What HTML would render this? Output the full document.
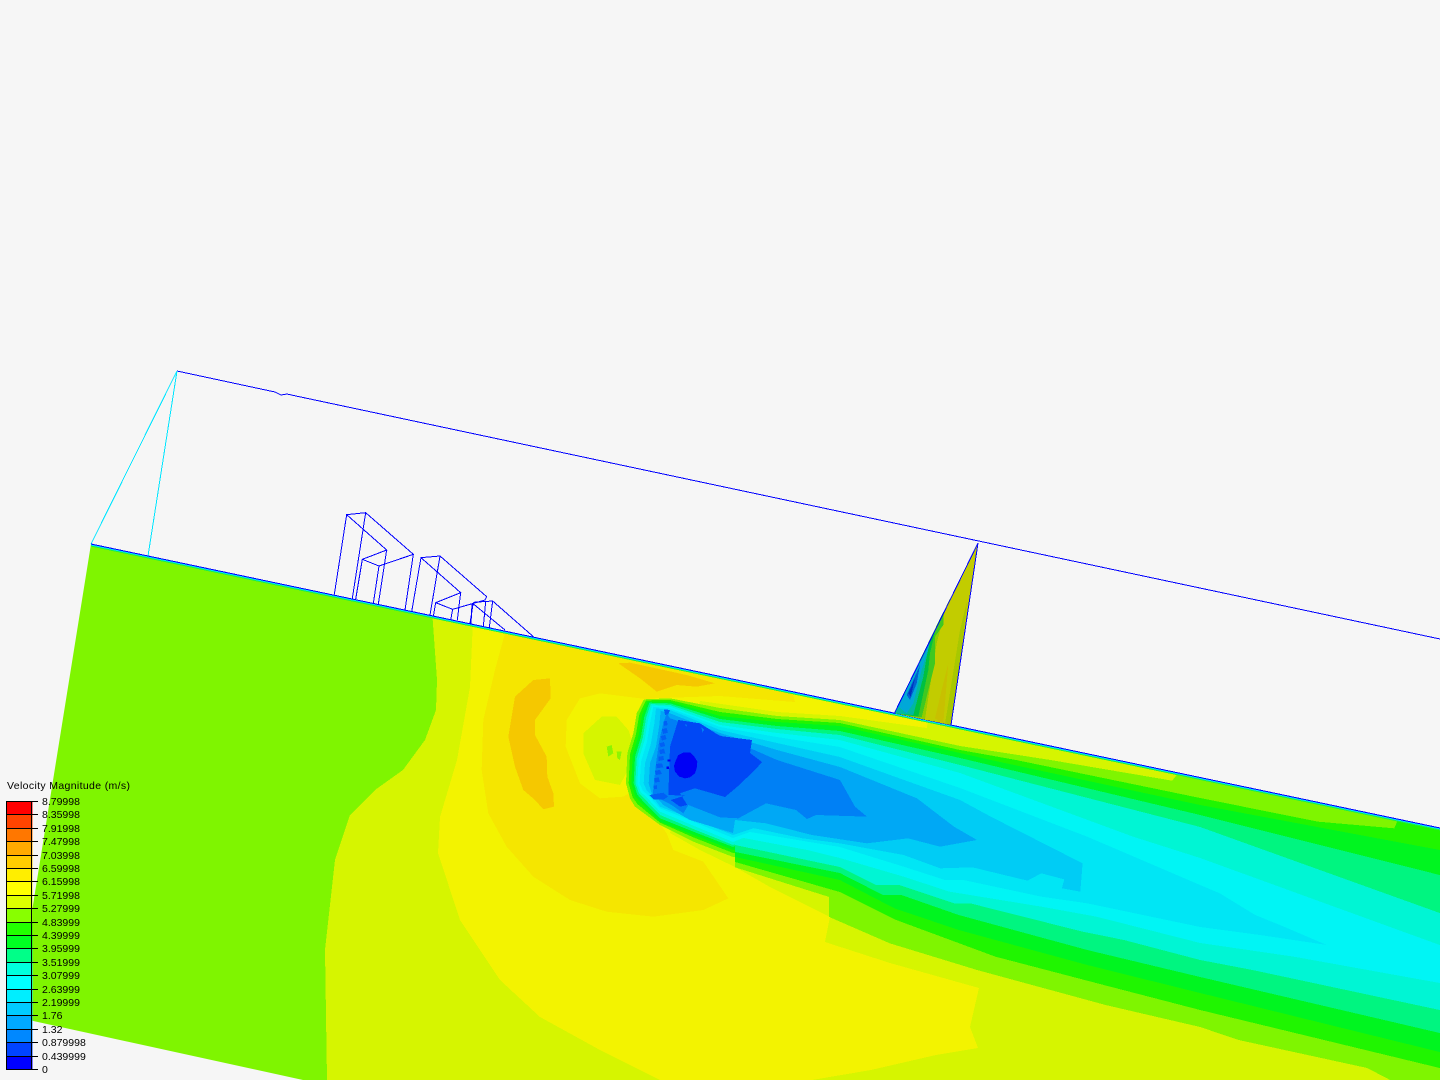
<!DOCTYPE html>
<html lang="en">
<head>
<meta charset="utf-8">
<title>Velocity Magnitude</title>
<style>
html,body{margin:0;padding:0;background:#f6f6f6;width:1440px;height:1080px;overflow:hidden}
svg{display:block;position:absolute;left:0;top:0}
text{font-family:"Liberation Sans","DejaVu Sans",sans-serif;font-size:10.5px;fill:#000}
</style>
</head>
<body>
<svg width="1440" height="1080" viewBox="0 0 1440 1080" xmlns="http://www.w3.org/2000/svg">
<defs>
<clipPath id="plane"><polygon points="91,544 1440,828 1440,1080 303,1080 15,1017"/></clipPath>
</defs>
<rect width="1440" height="1080" fill="#f6f6f6"/>

<!-- wireframe top -->
<g fill="none" stroke-width="1" shape-rendering="crispEdges">
<polyline stroke="#0000ff" points="177,371 275,392 281,395 287,394 296,396 1440,639"/>
<line stroke="#00e5ff" x1="177" y1="371" x2="91" y2="544"/>
<line stroke="#00e5ff" x1="177" y1="371" x2="148" y2="556"/>
</g>

<!-- blocks -->
<g transform="translate(320,500) scale(.33333)" fill="none" stroke="#0000ff" stroke-width="3" shape-rendering="crispEdges">
<path d="M43,283L80,44L137,38L97,295M80,44L200,150L127,178L107,298M137,38L280,163L177,198L160,310M127,178L177,198M200,150L175,312M280,163L255,330"/>
<path d="M275,335L303,173L360,168L330,345M303,173L422,278L347,308L340,350M360,168L500,290L495,300L398,328L392,360M347,308L398,328M422,278L412,360"/>
<path d="M460,307L518,303L508,382M460,307L450,370M497,305L490,380M458,310L555,390M518,303L640,410M456,310L453,372"/>
</g>

<!-- plane contours -->
<g clip-path="url(#plane)" shape-rendering="crispEdges">
<rect x="0" y="500" width="1440" height="580" fill="#7ff500"/>
<polygon fill="#d6f500" points="432,610 437,680 436,710 425,740 403,770 375,790 350,815 335,860 325,950 327,1080 1440,1080 1440,780 1100,700"/>
<polygon fill="#f3f300" points="473,620 470,687 457,760 440,817 438,853 460,920 500,980 540,1017 600,1050 660,1080 812,1080 871,1070 936,1055 978,1048 970,1027 979,988 890,963 825,942 830,917 800,902 770,887 735,867 700,850 670,833 680,800 700,701 777,712 840,716 927,728 930,700 600,610"/>

<g transform="translate(420,620) scale(.33333)">
<polygon fill="#f5e600" points="255,40 225,150 190,300 185,450 205,580 260,680 340,770 450,840 560,875 700,890 850,870 925,835 850,725 760,690 740,640 640,500 660,240 700,235 900,228 1125,246 1100,150 600,60"/>
<polygon fill="#f3f300" points="700,240 540,220 480,235 440,300 437,380 480,490 540,535 610,530 660,500 680,300"/>
<polygon fill="#d6f500" points="490,340 545,290 590,290 625,330 650,400 600,495 525,480 490,400"/>
<polygon fill="#8cf500" points="560,380 575,375 580,400 565,410"/>
<polygon fill="#8cf500" points="590,395 605,395 600,420 592,415"/>
<polygon fill="#f5c800" points="340,180 390,175 392,235 345,300 345,345 380,410 382,470 400,520 402,560 370,568 345,540 310,510 285,440 265,350 285,230"/>
<polygon fill="#f5c800" points="595,130 630,128 800,165 885,190 830,200 770,195 710,215 660,175"/>
</g>

<g fill="#7ff500">
<polygon transform="translate(600,680) scale(.33333)" points="720,120 531,108 360,84 210,55 132,58 110,100 100,160 82,220 78,310 90,355 105,380 180,435 280,485 399,531 405,531 720,360"/>
<polygon transform="translate(720,760) scale(.459,.33333)" points="261,-120 523,-42 720,0 985,62 1010,20 1600,190 1600,1000 1460,960 1410,924 1130,840 1046,801 840,735 560,630 370,550 238,471 238,411 33,322 33,100"/>
</g>
<g fill="#20f500">
<polygon transform="translate(600,680) scale(.33333)" points="720,129 531,117 360,96 210,60 138,61 118,103 108,163 90,223 86,310 98,352 112,372 180,428 280,472 399,519 405,519 720,360"/>
<polygon transform="translate(720,760) scale(.459,.33333)" points="261,-111 523,-30 645,0 1046,114 1303,185 1469,205 1480,170 1600,190 1600,924 1568,924 1046,750 850,680 600,590 380,478 261,396 33,306 33,100"/>
</g>
<g fill="#00f520">
<polygon transform="translate(600,680) scale(.33333)" points="720,138 531,126 360,108 210,65 143,65 126,106 116,166 98,226 94,310 105,348 120,365 180,425 280,465 399,510 405,510 720,360"/>
<polygon transform="translate(720,760) scale(.459,.33333)" points="261,-102 523,-21 590,0 1046,135 1568,270 1600,280 1600,884 1568,876 1046,699 800,615 520,510 380,445 261,360 33,291 33,100"/>
</g>
<g fill="#00f580">
<polygon transform="translate(600,680) scale(.33333)" points="720,153 531,138 360,117 210,70 148,68 133,110 123,170 105,230 101,310 112,344 126,360 180,415 280,455 399,501 720,360"/>
<polygon transform="translate(720,760) scale(.459,.33333)" points="261,-87 523,-6 1046,165 1568,345 1600,355 1600,830 1568,819 1046,651 800,570 520,465 395,405 355,405 261,339 33,276 33,100"/>
</g>
<g fill="#00f5d4">
<polygon transform="translate(600,680) scale(.33333)" points="720,165 531,147 360,126 210,75 152,72 138,115 128,175 110,235 106,310 117,340 132,355 180,405 280,447 399,495 720,360"/>
<polygon transform="translate(720,760) scale(.459,.33333)" points="261,-75 523,15 1046,201 1568,459 1600,475 1600,760 1568,750 1160,630 1046,600 880,540 790,515 545,430 510,430 390,375 340,375 261,321 33,255 33,100"/>
</g>
<g fill="#00f5f5">
<polygon transform="translate(600,680) scale(.33333)" points="720,180 531,159 360,135 210,80 156,76 144,120 134,180 116,240 112,310 122,336 138,350 180,395 280,437 399,486 720,360"/>
<polygon transform="translate(720,760) scale(.459,.33333)" points="261,-60 523,39 900,230 1046,294 1568,555 1600,570 1600,675 1568,669 1250,590 1046,549 820,470 700,440 500,395 400,350 261,294 190,270 40,231 33,231 33,100"/>
</g>
<g fill="#00e6f5">
<polygon transform="translate(600,680) scale(.33333)" points="720,201 531,171 360,141 210,85 160,80 151,125 141,185 123,245 119,310 128,332 144,345 180,385 280,425 399,474 720,360"/>
<polygon transform="translate(720,760) scale(.459,.33333)" points="261,-39 523,84 800,230 1046,375 1089,400 1166,465 1220,495 1322,555 1176,525 1046,501 800,430 700,410 530,360 490,360 400,320 261,261 190,245 40,210 33,210 33,100"/>
</g>
<g fill="#00ccf5">
<polygon transform="translate(600,680) scale(.33333)" points="720,231 531,189 360,150 210,90 168,85 163,130 153,190 135,250 131,310 140,332 155,345 180,380 280,418 399,465 720,360"/>
<polygon transform="translate(720,760) scale(.459,.33333)" points="261,-9 523,120 590,170 790,310 785,395 745,385 750,358 700,340 670,362 550,322 480,325 400,285 261,250 180,235 40,195 33,195 33,100"/>
</g>
<g transform="translate(600,680) scale(.33333)">
<polygon fill="#00a8f5" points="951,355 720,261 531,210 360,159 210,100 182,92 178,135 168,200 150,250 146,310 155,340 170,352 190,375 270,420 399,459 405,420 498,430 636,465 801,490 924,475 1020,500 1131,480 1062,440"/>
<polygon fill="#0080f5" points="200,100 190,130 178,180 168,250 158,345 215,375 250,400 265,375 360,412 415,415 498,370 588,390 621,417 648,405 801,410 765,380 720,300 531,240 360,165 210,115"/>
<polygon fill="#0048f5" points="235,120 300,130 360,168 456,180 450,219 486,246 465,270 411,321 375,351 285,325 240,340 262,375 240,380 212,360 255,347 205,345 210,200"/>
<g fill="#0060f5">
<polygon points="192,88 210,90 205,103 195,105"/>
<polygon points="190,125 200,122 203,135 193,138"/>
<polygon points="185,148 200,144 204,158 190,162"/>
<polygon points="182,168 196,165 200,177 186,182"/>
<polygon points="178,190 192,186 196,198 182,202"/>
<polygon points="178,210 192,206 196,220 180,222"/>
<polygon points="175,230 190,228 192,240 176,243"/>
<polygon points="168,252 186,250 190,262 170,265"/>
<polygon points="165,272 180,270 186,282 168,285"/>
<polygon points="162,295 176,292 180,305 165,308"/>
<polygon points="160,318 170,315 172,326 162,328"/>
<polygon points="148,345 190,338 204,350 192,358 160,358"/>
</g>
<polygon fill="#0000f5" points="235,225 250,218 270,217 283,230 292,245 290,265 285,280 270,292 255,295 238,290 225,275 222,258 228,240"/>
<polygon fill="#0000f5" points="203,238 212,238 212,245 203,245"/>
<polygon fill="#0000f5" points="199,259 207,259 207,267 199,267"/>
<polygon fill="#0080f5" points="255,133 262,135 258,140"/>
<polygon fill="#0080f5" points="305,142 312,150 306,158"/>
</g>
</g>

<!-- plane top edge -->
<g fill="none" stroke-width="1" shape-rendering="crispEdges">
<line x1="91" y1="546" x2="1440" y2="830" stroke="#20f040"/>
<line x1="91" y1="545" x2="1440" y2="829" stroke="#00e0ff"/>
<line x1="91" y1="544" x2="1440" y2="828" stroke="#0000ff"/>
</g>

<!-- fin -->
<g transform="translate(880,530) scale(.33333)" shape-rendering="crispEdges">
<polygon fill="#c2cc00" points="295,35 42,550 212,585"/>
<polygon fill="#c8c000" points="205,400 185,480 165,565 190,580"/>
<polygon fill="#a8c800" points="262,210 240,400 212,585 195,582 240,300"/>
<polygon fill="#90cc00" points="42,550 240,150 200,225 170,340 135,568"/>
<polygon fill="#40c820" points="42,550 190,245 190,285 165,320 165,400 125,562"/>
<polygon fill="#00c040" points="42,550 165,305 150,370 145,420 115,560"/>
<polygon fill="#00b8a0" points="45,550 150,335 140,380 130,440 100,555"/>
<polygon fill="#00a8d8" points="55,530 150,340 125,420 100,520 80,550"/>
<polygon fill="#0060d0" points="80,495 120,405 110,460 90,510"/>
<polygon fill="#0030c0" points="85,490 105,445 92,500"/>
</g>
<g fill="none" stroke="#0000ff" stroke-width="1" shape-rendering="crispEdges">
<line x1="978" y1="543" x2="894" y2="714"/>
<line x1="978" y1="543" x2="951" y2="725"/>
</g>

<!-- legend -->
<g shape-rendering="crispEdges">
<rect x="6.5" y="801.5" width="26" height="13.4" fill="#ff0000"/>
<rect x="6.5" y="814.9" width="26" height="13.4" fill="#ff4400"/>
<rect x="6.5" y="828.3" width="26" height="13.4" fill="#ff7700"/>
<rect x="6.5" y="841.7" width="26" height="13.4" fill="#ffaa00"/>
<rect x="6.5" y="855.1" width="26" height="13.4" fill="#ffcc00"/>
<rect x="6.5" y="868.5" width="26" height="13.4" fill="#ffee00"/>
<rect x="6.5" y="881.9" width="26" height="13.4" fill="#ffff00"/>
<rect x="6.5" y="895.3" width="26" height="13.4" fill="#ddff00"/>
<rect x="6.5" y="908.7" width="26" height="13.4" fill="#88ff00"/>
<rect x="6.5" y="922.1" width="26" height="13.4" fill="#22ff00"/>
<rect x="6.5" y="935.5" width="26" height="13.4" fill="#00ff22"/>
<rect x="6.5" y="948.9" width="26" height="13.4" fill="#00ff88"/>
<rect x="6.5" y="962.3" width="26" height="13.4" fill="#00ffdd"/>
<rect x="6.5" y="975.7" width="26" height="13.4" fill="#00ffff"/>
<rect x="6.5" y="989.1" width="26" height="13.4" fill="#00eeff"/>
<rect x="6.5" y="1002.5" width="26" height="13.4" fill="#00ccff"/>
<rect x="6.5" y="1015.9" width="26" height="13.4" fill="#00aaff"/>
<rect x="6.5" y="1029.3" width="26" height="13.4" fill="#0088ff"/>
<rect x="6.5" y="1042.7" width="26" height="13.4" fill="#0044ff"/>
<rect x="6.5" y="1056.1" width="26" height="13.4" fill="#0000ff"/>
<g fill="#000">
<rect x="6" y="801" width="32" height="1"/><rect x="6" y="814" width="32" height="1"/><rect x="6" y="828" width="32" height="1"/><rect x="6" y="841" width="32" height="1"/><rect x="6" y="855" width="32" height="1"/><rect x="6" y="868" width="32" height="1"/><rect x="6" y="881" width="32" height="1"/><rect x="6" y="895" width="32" height="1"/><rect x="6" y="908" width="32" height="1"/><rect x="6" y="922" width="32" height="1"/><rect x="6" y="935" width="32" height="1"/><rect x="6" y="948" width="32" height="1"/><rect x="6" y="962" width="32" height="1"/><rect x="6" y="975" width="32" height="1"/><rect x="6" y="989" width="32" height="1"/><rect x="6" y="1002" width="32" height="1"/><rect x="6" y="1015" width="32" height="1"/><rect x="6" y="1029" width="32" height="1"/><rect x="6" y="1042" width="32" height="1"/><rect x="6" y="1056" width="32" height="1"/><rect x="6" y="1069" width="32" height="1"/>
<rect x="6" y="801" width="1" height="269"/><rect x="31" y="801" width="1" height="269"/>
</g>
</g>
<text x="7" y="789" textLength="123" lengthAdjust="spacing">Velocity Magnitude (m/s)</text>
<text x="42" y="805">8.79998</text>
<text x="42" y="818">8.35998</text>
<text x="42" y="832">7.91998</text>
<text x="42" y="845">7.47998</text>
<text x="42" y="859">7.03998</text>
<text x="42" y="872">6.59998</text>
<text x="42" y="885">6.15998</text>
<text x="42" y="899">5.71998</text>
<text x="42" y="912">5.27999</text>
<text x="42" y="926">4.83999</text>
<text x="42" y="939">4.39999</text>
<text x="42" y="952">3.95999</text>
<text x="42" y="966">3.51999</text>
<text x="42" y="979">3.07999</text>
<text x="42" y="993">2.63999</text>
<text x="42" y="1006">2.19999</text>
<text x="42" y="1019">1.76</text>
<text x="42" y="1033">1.32</text>
<text x="42" y="1046">0.879998</text>
<text x="42" y="1060">0.439999</text>
<text x="42" y="1073">0</text>
</svg>
</body>
</html>
